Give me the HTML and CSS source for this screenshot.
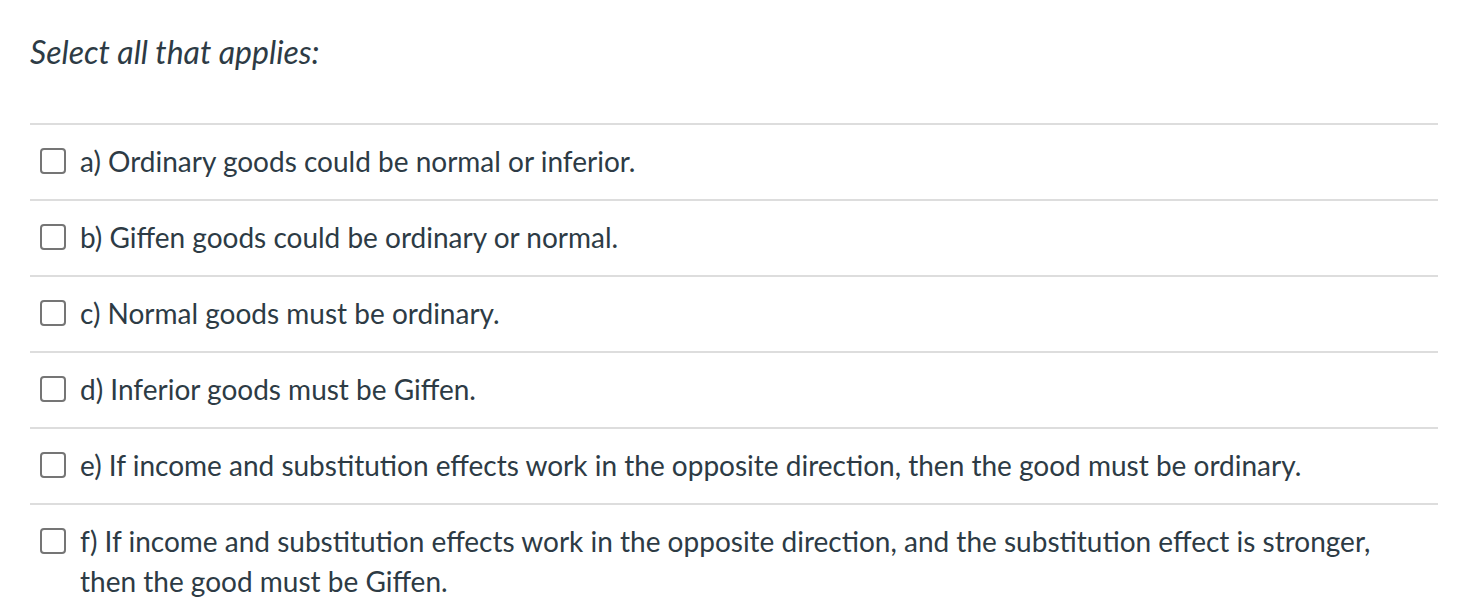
FILE: index.html
```html
<!DOCTYPE html>
<html>
<head>
<meta charset="utf-8">
<link rel="stylesheet" href="styles.css">
</head>
<body>
<div class="question">
  <p class="prompt">Select all that applies:</p>
  <div class="answers">
    <label class="answer"><span class="box"></span><span class="text">a) Ordinary goods could be normal or inferior.</span></label>
    <label class="answer"><span class="box"></span><span class="text">b) Giffen goods could be ordinary or normal.</span></label>
    <label class="answer"><span class="box"></span><span class="text">c) Normal goods must be ordinary.</span></label>
    <label class="answer"><span class="box"></span><span class="text">d) Inferior goods must be Giffen.</span></label>
    <label class="answer"><span class="box"></span><span class="text">e) If income and substitution effects work in the opposite direction, then the good must be ordinary.</span></label>
    <label class="answer"><span class="box"></span><span class="text">f) If income and substitution effects work in the opposite direction, and the substitution effect is stronger, then the good must be Giffen.</span></label>
  </div>
</div>
</body>
</html>
```
FILE: styles.css
```css
html, body {
  margin: 0;
  padding: 0;
  background: #ffffff;
}
body {
  font-family: Lato, "Open Sans", sans-serif;
  color: #2d3b45;
}
.question {
  width: 1408px;
  margin-left: 30px;
}
.prompt {
  margin: 0;
  padding-top: 30px;
  font-style: italic;
  font-size: 32px;
  line-height: 44px;
  height: 93px;
}
.answers {
  display: flex;
  flex-direction: column;
}
.answer {
  display: flex;
  align-items: flex-start;
  border-top: 2px solid #dddddd;
  padding: 16px 0 18px 10px;
  min-height: 40px;
  font-size: 28px;
  line-height: 40px;
}
.box {
  flex: none;
  width: 22px;
  height: 22px;
  border: 2px solid #757575;
  border-radius: 4px;
  margin-top: 7px;
  margin-right: 14px;
}
.text {
  flex: 1;
  padding-right: 40px;
}
```
